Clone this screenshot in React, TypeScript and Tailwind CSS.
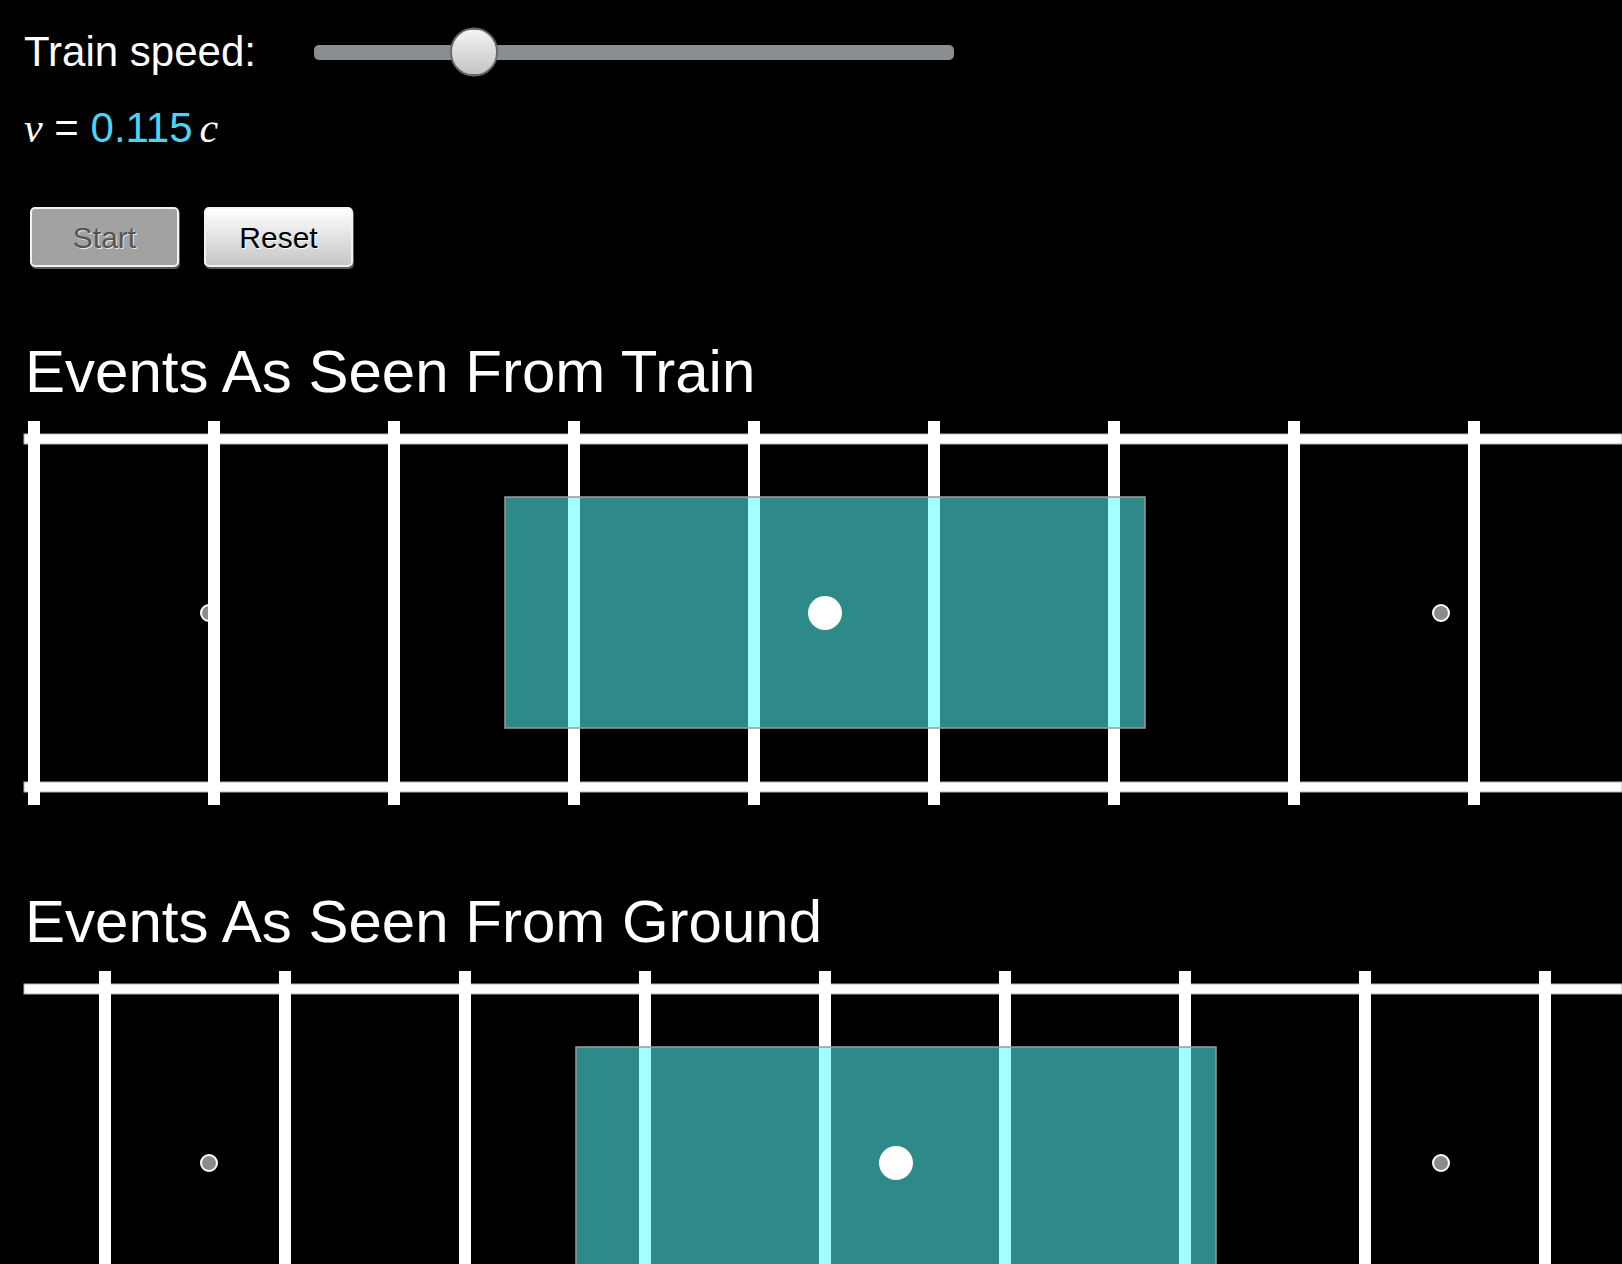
import { useState } from "react";

const TIE_W = 12;
const SVG_W = 1598;
const SVG_H = 384;

// one track view: rails, ties, the two station lamps and the train
function TrackView({ tieStart, trainX }: { tieStart: number; trainX: number }) {
  const ties: number[] = [];
  for (let x = tieStart; x < SVG_W + TIE_W; x += 180) ties.push(x);

  return (
    <svg width={SVG_W} height={SVG_H} className="block overflow-visible">
      {/* rails */}
      <rect x={0} y={13} width={SVG_W} height={10} fill="#fff" stroke="#b5b5b5" strokeWidth={1} />
      <rect x={0} y={361} width={SVG_W} height={10} fill="#fff" stroke="#b5b5b5" strokeWidth={1} />

      {/* lamps on the ground */}
      <circle cx={185} cy={192} r={8} fill="#8c8c8c" stroke="#fff" strokeWidth={2} />
      <circle cx={1417} cy={192} r={8} fill="#8c8c8c" stroke="#fff" strokeWidth={2} />

      {/* ties */}
      {ties.map((x) => (
        <rect key={x} x={x} y={0} width={TIE_W} height={SVG_H} fill="#fff" />
      ))}

      {/* train car */}
      <rect
        x={trainX}
        y={76}
        width={640}
        height={231}
        fill="#54fffb"
        fillOpacity={0.54}
        stroke="#9a9a9a"
        strokeWidth={1.5}
      />
      <circle cx={trainX + 320} cy={192} r={17} fill="#fff" />
    </svg>
  );
}

export default function App() {
  const [speed] = useState(0.115);

  return (
    <div className="min-h-screen w-full overflow-hidden bg-black pl-6 pb-24 text-white" style={{ fontFamily: '"Liberation Sans", Arial, sans-serif' }}>
      {/* speed slider */}
      <div className="mt-[28px] flex h-[48px] items-center">
        <div className="w-[290px] text-[42px] leading-[48px]">Train speed:</div>
        <div className="relative h-[15px] w-[640px] rounded-[5px] bg-[#8a8e91]">
          <div className="absolute top-1/2 left-[136px] h-[49px] w-[48px] -translate-y-1/2 rounded-full border-2 border-[#6a6a6a] bg-linear-to-b from-[#f5f5f5] via-[#dcdcdc] to-[#c4c4c4]" />
        </div>
      </div>

      <div className="mt-[28px] h-[48px] text-[42px] leading-[48px]">
        <span className="italic" style={{ fontFamily: '"Liberation Serif", "Times New Roman", serif' }}>v</span>
        <span> = </span>
        <span className="text-[#4fd3f3]">{speed.toFixed(3)}</span>
        <span className="ml-[7px] italic" style={{ fontFamily: '"Liberation Serif", "Times New Roman", serif' }}>c</span>
      </div>

      {/* controls */}
      <div className="mt-[55px] ml-[6px] flex gap-[25px]">
        <button
          disabled
          className="h-[60px] w-[149px] rounded-[5px] border-2 border-[#f2f2f2] bg-[#a2a2a2] text-[30px] text-[#555] shadow-[1px_2px_0_#5c5c5c] [text-shadow:1px_1px_0_#e8e8e8]"
        >
          Start
        </button>
        <button className="h-[60px] w-[149px] rounded-[5px] border-2 border-[#f2f2f2] bg-linear-to-b from-white to-[#c6c6c6] text-[30px] text-black shadow-[1px_2px_0_#5c5c5c] [text-shadow:1px_1px_0_#fff]">
          Reset
        </button>
      </div>

      <h2 className="mt-[75px] h-[60px] pl-px text-[60px] leading-[60px] font-normal">Events As Seen From Train</h2>
      <div className="mt-[19px]">
        <TrackView tieStart={4} trainX={481} />
      </div>

      <h2 className="mt-[87px] h-[60px] pl-px text-[60px] leading-[60px] font-normal">Events As Seen From Ground</h2>
      <div className="mt-[19px]">
        <TrackView tieStart={75} trainX={552} />
      </div>
    </div>
  );
}
